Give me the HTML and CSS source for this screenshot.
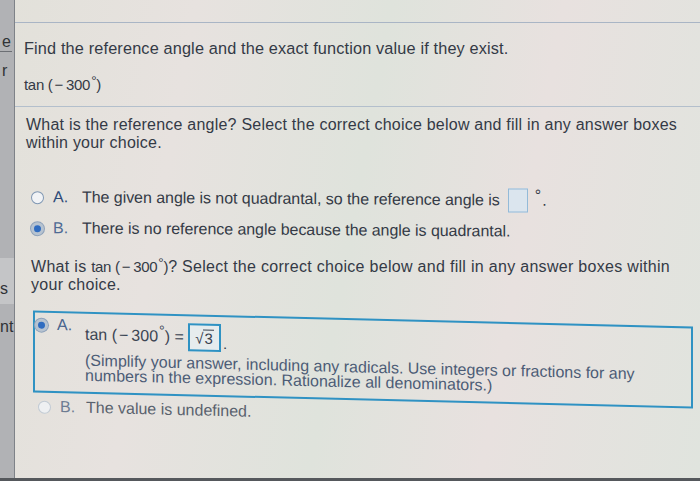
FILE: index.html
```html
<!DOCTYPE html>
<html>
<head>
<meta charset="utf-8">
<link rel="stylesheet" href="styles.css">
</head>
<body>
<div class="page">
  <aside class="strip">
    <span class="frag frag-e">e</span>
    <span class="frag frag-r">r</span>
    <div class="band"><span class="frag frag-s">s</span></div>
    <span class="frag frag-nt">nt</span>
  </aside>
  <main class="main">
    <div class="q1">
      <p class="prompt">Find the reference angle and the exact function value if they exist.</p>
      <p class="expr">tan (<span class="minus">−</span>300<sup>°</sup>)</p>
    </div>

    <section class="part1">
      <p class="instr">What is the reference angle? Select the correct choice below and fill in any answer boxes within your choice.</p>
      <div class="choices tilt-1">
        <div class="choice">
          <span class="radio"></span>
          <span class="letter">A.</span>
          <span class="ctext">The given angle is not quadrantal, so the reference angle is</span>
          <span class="blank"></span>
          <span class="deg">°</span><span class="dot">.</span>
        </div>
        <div class="choice choice-b">
          <span class="radio checked"></span>
          <span class="letter letter-b">B.</span>
          <span class="ctext">There is no reference angle because the angle is quadrantal.</span>
        </div>
      </div>
    </section>

    <section class="part2">
      <div class="instr2">
        <p class="line">What is <span class="math">tan (<span class="minus">−</span>300<sup>°</sup>)</span>? Select the correct choice below and fill in any answer boxes within</p>
        <p class="line">your choice.</p>
      </div>
      <div class="tilt-3">
        <div class="box">
          <span class="radio checked"></span>
          <span class="letter letter-in">A.</span>
          <div class="boxbody">
            <div class="eqrow">
              <span class="math eq">tan (<span class="minus">−</span>300<sup>°</sup>) =</span>
              <span class="ansbox"><span class="rsign">√</span><span class="radicand">3</span></span>
              <span class="dot2">.</span>
            </div>
            <p class="hint">(Simplify your answer, including any radicals. Use integers or fractions for any numbers in the expression. Rationalize all denominators.)</p>
          </div>
        </div>
        <div class="choice2">
          <span class="radio faded"></span>
          <span class="letter letter-b2">B.</span>
          <span class="ctext2">The value is undefined.</span>
        </div>
      </div>
    </section>
  </main>
</div>
</body>
</html>
```

FILE: styles.css
```css
html, body {
  margin: 0;
  padding: 0;
}
body {
  width: 700px;
  height: 481px;
  overflow: hidden;
  background: #e3e2dc;
  font-family: "Liberation Sans", Arial, sans-serif;
  color: #343a46;
}
p { margin: 0; }
sup {
  font-size: 0.9em;
  vertical-align: 0.4em;
  line-height: 0;
  margin-left: 1px;
}

.page {
  display: flex;
  height: 478px;
  border-bottom: 3px solid #55585c;
  background: linear-gradient(100deg, #e2e1da 0%, #e7e2df 25%, #dfe3dc 50%, #e8e1df 72%, #e0e4de 100%);
}

/* left strip */
.strip {
  width: 14px;
  flex: none;
  background: #b1b2b5;
  border-right: 1px solid #7e8288;
  display: flex;
  flex-direction: column;
  font-size: 16px;
  color: #2f3236;
}
.frag {
  display: block;
  line-height: 18px;
}
.frag-e {
  margin-top: 33px;
  padding-left: 2px;
  border-bottom: 1px solid #6c6f74;
  width: 10px;
  overflow: hidden;
}
.frag-r {
  margin-top: 10px;
  padding-left: 2px;
}
.band {
  margin-top: 178px;
  height: 46px;
  background: #c4c5c7;
  display: flex;
  align-items: flex-end;
}
.frag-s {
  margin-bottom: 6px;
}
.frag-nt {
  margin-top: 14px;
  width: 20px;
  white-space: nowrap;
}

/* main content */
.main {
  flex: 1;
  min-width: 0;
  margin-top: 22px;
  border-top: 1px solid #a9b5c5;
}
.q1 {
  padding: 15px 0 11px 9px;
  border-bottom: 1px solid #b3bfcc;
}
.prompt {
  font-size: 16.3px;
  line-height: 20px;
  letter-spacing: 0.15px;
}
.expr {
  margin-top: 17px;
  font-size: 15px;
  line-height: 20px;
  letter-spacing: -0.3px;
}
.minus { padding: 0 3px 0 2px; }

.part1 {
  padding-top: 9px;
}
.instr {
  padding-left: 11px;
  font-size: 16px;
  line-height: 18px;
  letter-spacing: 0.22px;
  padding-right: 8px;
}
.choices {
  margin-top: 33px;
  padding-left: 16px;
}
.tilt-1 { transform: skewY(0.4deg); transform-origin: left center; }
.tilt-3 { transform: skewY(1.4deg); transform-origin: left top; }

.choice {
  display: flex;
  align-items: center;
  height: 24px;
  font-size: 16px;
}
.choice-b {
  margin-top: 7px;
}
.radio {
  flex: none;
  width: 11px;
  height: 11px;
  border-radius: 50%;
  border: 1px solid #7f97b3;
  background: #f1f3f6;
  box-sizing: content-box;
}
.radio.checked {
  width: 7px;
  height: 7px;
  border: 3px solid #b7c3d0;
  background: #2f6cc0;
  box-shadow: 0 0 0 1px #8fa3bb;
}
.radio.faded {
  border-color: #c2cbd4;
  background: #eef0f2;
}
.letter {
  flex: none;
  width: 29px;
  margin-left: 9px;
  color: #2d4a78;
}
.letter-b {
  color: #4e6a94;
}
.ctext {
  letter-spacing: -0.05px;
}
.blank {
  flex: none;
  width: 18px;
  height: 22px;
  margin-left: 8px;
  border: 1px solid #93bad8;
  background: #dbe5ee;
}
.deg {
  margin-left: 7px;
  align-self: flex-start;
  line-height: 14px;
}
.dot {
  margin-left: 1px;
}

.part2 {
  padding-top: 18px;
}
.instr2 {
  padding-left: 16px;
  font-size: 16px;
  line-height: 18px;
  letter-spacing: 0.3px;
}
.line {
  white-space: nowrap;
}
.math {
  font-size: 15px;
  letter-spacing: -0.3px;
}

.box {
  margin: 16px 7px 0 18px;
  border: 2px solid #2f92c3;
  display: flex;
  align-items: flex-start;
  padding: 6px 0 0 0;
  height: 72px;
}
.letter-in {
  width: 28px;
  margin-top: -2px;
  font-size: 16px;
  line-height: 16px;
  color: #49658e;
}
.boxbody {
  flex: 1;
  margin-top: 1px;
}
.eqrow {
  display: flex;
  align-items: center;
  height: 28px;
}
.eq {
  color: #3c4553;
  font-size: 16px;
  letter-spacing: 0;
}
.ansbox {
  flex: none;
  display: flex;
  align-items: center;
  justify-content: center;
  width: 29px;
  height: 24px;
  margin-left: 4px;
  border: 2px solid #2f92c3;
  background: #e6ecee;
  font-size: 15px;
  color: #3a414e;
}
.rsign {
  font-size: 15px;
}
.radicand {
  border-top: 1px solid #3a414e;
  line-height: 15px;
  padding: 0 1px;
}
.dot2 {
  margin-left: 2px;
  align-self: flex-end;
  font-size: 15px;
}
.hint {
  margin-top: 4px;
  font-size: 16px;
  line-height: 15px;
  color: #4c5c76;
  padding-right: 20px;
}

.choice2 {
  display: flex;
  align-items: center;
  margin: 4px 0 0 23px;
  height: 20px;
  font-size: 16px;
  color: #59616d;
}
.letter-b2 {
  color: #6d7c92;
  width: 26px;
}
```
